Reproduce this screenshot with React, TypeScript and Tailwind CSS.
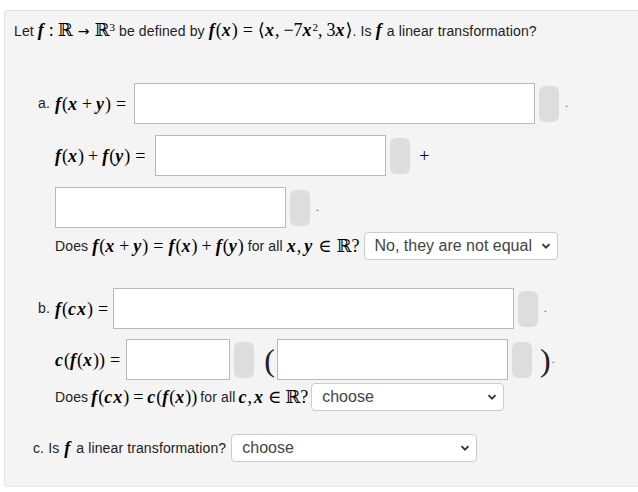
import React from "react";

const mathFont = "font-['Liberation_Serif','DejaVu_Serif',serif]";

function M({ children, className = "" }: { children: React.ReactNode; className?: string }) {
    return (
        <span
            className={`${mathFont} text-[18px] leading-none tracking-normal text-black whitespace-nowrap ${className}`}
        >
            {children}
        </span>
    );
}

function V({ children }: { children: React.ReactNode }) {
    return <i className="font-semibold pr-[1px]">{children}</i>;
}

// relation / binary operator with MathJax-like spacing
function Op({ children, wide = false }: { children: React.ReactNode; wide?: boolean }) {
    return <span className={wide ? "mx-[5px]" : "mx-[4px]"}>{children}</span>;
}

function Field({ w }: { w: string }) {
    return <div className={`${w} h-[41px] shrink-0 border border-[#b9b9b9] bg-white`} />;
}

function Btn() {
    return <div className="ml-[4px] h-[36px] w-[20px] shrink-0 rounded-[6px] bg-[#dddddd]" />;
}

function Dot({ className = "" }: { className?: string }) {
    return <span className={`text-[10px] leading-none text-[#333] ${className}`}>.</span>;
}

function Choose({ label, w, className = "ml-[4px]" }: { label: string; w: string; className?: string }) {
    return (
        <div
            className={`${w} ${className} flex h-[28px] shrink-0 items-center justify-between rounded-[4px] border border-[#cccccc] bg-white pl-[10px] pr-[6px] tracking-normal`}
        >
            <span className="text-[16px] leading-none text-[#444]">{label}</span>
            <svg width="10" height="10" viewBox="0 0 10 10" className="text-[#333]">
                <path d="M1.5 3.2 L5 6.7 L8.5 3.2" fill="none" stroke="currentColor" strokeWidth="1.8" />
            </svg>
        </div>
    );
}

export default function App() {
    return (
        <div className="h-[492px] w-[638px] overflow-hidden bg-white font-['Liberation_Sans',Arial,sans-serif] text-[14px] tracking-[0.12px] text-[#222]">
            <div className="ml-[4px] mt-[10px] h-[477px] w-[650px] rounded-[3px] border border-[#e2e2e2] bg-[#f4f4f4]">
                {/* Question */}
                <div className="pl-[9px] pt-[10px] leading-[18px]">
                    Let{" "}
                    <M>
                        <V>f</V>
                        <Op>:</Op>ℝ
                        <span className="mx-[5px] font-['DejaVu_Sans',sans-serif] text-[14px]">→</span>ℝ
                        <sup className="text-[11px]">3</sup>
                    </M>{" "}
                    be defined by{" "}
                    <M>
                        <V>f</V>(<V>x</V>)<Op wide>=</Op>⟨<V>x</V>,<span className="ml-[4px]">−7</span>
                        <V>x</V>
                        <sup className="text-[11px]">2</sup>,<span className="ml-[4px]">3</span>
                        <V>x</V>⟩
                    </M>
                    . Is <M><V>f</V></M> a linear transformation?
                </div>

                {/* Part a */}
                <div className="mt-[43px] pl-[33px]">
                    <div className="flex items-center">
                        <span>a.</span>
                        <M className="ml-[5px] pr-[3px]">
                            <V>f</V>(<V>x</V>
                            <Op>+</Op>
                            <V>y</V>)<Op wide>=</Op>
                        </M>
                        <Field w="w-[401px]" />
                        <Btn />
                        <Dot className="ml-[6px]" />
                    </div>
                    <div className="mt-[11px] flex items-center pl-[17px]">
                        <M className="pr-[5px]">
                            <V>f</V>(<V>x</V>)<Op>+</Op>
                            <V>f</V>(<V>y</V>)<Op wide>=</Op>
                        </M>
                        <Field w="w-[231px]" />
                        <Btn />
                        <M className="ml-[9px] text-[#333]">+</M>
                    </div>
                    <div className="mt-[11px] flex items-center pl-[17px]">
                        <Field w="w-[231px]" />
                        <Btn />
                        <Dot className="ml-[6px]" />
                    </div>
                    <div className="mt-[4px] flex items-center pl-[17px]">
                        <span>Does</span>
                        <M className="ml-[4px]">
                            <V>f</V>(<V>x</V>
                            <Op>+</Op>
                            <V>y</V>)<Op wide>=</Op>
                            <V>f</V>(<V>x</V>)<Op>+</Op>
                            <V>f</V>(<V>y</V>)
                        </M>
                        <span className="ml-[4px]">for all</span>
                        <M className="ml-[4px]">
                            <V>x</V>,<span className="ml-[3px]" />
                            <V>y</V>
                            <Op wide>∈</Op>ℝ?
                        </M>
                        <Choose label="No, they are not equal" w="w-[194px]" />
                    </div>
                </div>

                {/* Part b */}
                <div className="mt-[28px] pl-[33px]">
                    <div className="flex items-center">
                        <span>b.</span>
                        <M className="ml-[5px]">
                            <V>f</V>(<V>c</V>
                            <V>x</V>)<Op wide>=</Op>
                        </M>
                        <Field w="w-[401px]" />
                        <Btn />
                        <Dot className="ml-[6px]" />
                    </div>
                    <div className="mt-[10px] flex items-center pl-[17px]">
                        <M className="pr-[1px]">
                            <V>c</V>(<V>f</V>(<V>x</V>))<Op wide>=</Op>
                        </M>
                        <Field w="w-[104px]" />
                        <Btn />
                        <span className={`${mathFont} ml-[10px] text-[32px] leading-none text-[#222]`}>(</span>
                        <div className="ml-[2px]">
                            <Field w="w-[231px]" />
                        </div>
                        <Btn />
                        <span className={`${mathFont} ml-[8px] text-[32px] leading-none text-[#222]`}>)</span>
                        <Dot className="ml-[1px]" />
                    </div>
                    <div className="mt-[3px] flex items-center pl-[17px]">
                        <span>Does</span>
                        <M className="ml-[3px] text-[17px]">
                            <V>f</V>(<V>c</V>
                            <V>x</V>)<Op>=</Op>
                            <V>c</V>(<V>f</V>(<V>x</V>))
                        </M>
                        <span className="ml-[3px]">for all</span>
                        <M className="ml-[3px] text-[17px]">
                            <V>c</V>,<span className="ml-[2px]" />
                            <V>x</V>
                            <Op>∈</Op>ℝ?
                        </M>
                        <Choose label="choose" w="w-[193px]" className="ml-[3px]" />
                    </div>
                </div>

                {/* Part c */}
                <div className="mt-[23px] flex items-center pl-[28px]">
                    <span>c. Is</span>
                    <M className="ml-[5px]">
                        <V>f</V>
                    </M>
                    <span className="ml-[5px]">a linear transformation?</span>
                    <Choose label="choose" w="w-[246px]" className="ml-[5px]" />
                </div>
            </div>
        </div>
    );
}
